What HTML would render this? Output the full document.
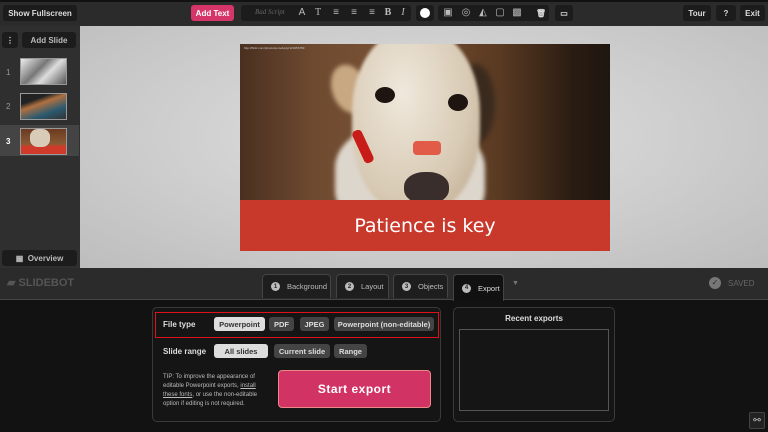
<!DOCTYPE html><html><head><style>
*{margin:0;padding:0;box-sizing:border-box}
body{width:768px;height:432px;overflow:hidden;background:#121212;font-family:"Liberation Sans",sans-serif;position:relative;color:#ddd}
.a{position:absolute}
.btn{position:absolute;background:#1c1c1c;border-radius:3px;color:#ddd;font-size:8px;font-weight:bold;display:flex;align-items:center;justify-content:center}
.ic{position:absolute;top:6px;height:14px;width:14px;color:#bbb;font-size:10px;text-align:center;line-height:14px}
.tab{position:absolute;top:274px;height:24px;background:#1e1e1e;border:1px solid #444;border-bottom:none;border-radius:4px 4px 0 0;font-size:7.5px;color:#bbb;display:flex;align-items:center;padding-left:8px}
.n{width:9px;height:9px;border-radius:50%;background:#bbb;color:#222;font-size:6px;display:inline-flex;align-items:center;justify-content:center;margin-right:7px;font-weight:bold}
.ch{position:absolute;height:14px;border-radius:3px;background:#444;color:#ddd;font-size:7.5px;font-weight:bold;display:flex;align-items:center;justify-content:center}
</style></head><body>
<div class="a" style="left:0;top:0;width:768px;height:26px;background:#2b2b2b;border-top:2px solid #111"></div>
<div class="btn" style="left:3px;top:5px;width:74px;height:16px">Show Fullscreen</div>
<div class="btn" style="left:191px;top:5px;width:43px;height:16px;background:#d6356a;color:#fff">Add Text</div>
<div class="a" style="left:241px;top:5px;width:170px;height:16px;background:#1c1c1c;border-radius:3px"></div>
<div class="a" style="left:255px;top:8px;font-size:7px;color:#666;font-style:italic;font-family:'Liberation Serif',serif">Bad Script</div>
<div class="ic" style="left:295px">A</div><div class="ic" style="left:311px;font-family:'Liberation Serif'">T</div><div class="ic" style="left:329px">≡</div><div class="ic" style="left:347px">≡</div><div class="ic" style="left:365px">≡</div><div class="ic" style="left:381px;font-family:'Liberation Serif';font-weight:bold">B</div><div class="ic" style="left:396px;font-family:'Liberation Serif';font-style:italic">I</div>
<div class="a" style="left:416px;top:5px;width:18px;height:16px;background:#1c1c1c;border-radius:3px"></div>
<div class="a" style="left:420px;top:8px;width:10px;height:10px;background:#fff;border-radius:50%"></div>
<div class="a" style="left:438px;top:5px;width:100px;height:16px;background:#1c1c1c;border-radius:3px"></div>
<div class="ic" style="left:441px">▣</div><div class="ic" style="left:459px">◎</div><div class="ic" style="left:476px">◭</div><div class="ic" style="left:493px">▢</div><div class="ic" style="left:510px">▩</div>
<div class="btn" style="left:533px;top:5px;width:16px;height:16px">🗑</div>
<div class="btn" style="left:555px;top:5px;width:18px;height:16px">▭</div>
<div class="btn" style="left:683px;top:5px;width:28px;height:16px">Tour</div>
<div class="btn" style="left:716px;top:5px;width:20px;height:16px">?</div>
<div class="btn" style="left:740px;top:5px;width:25px;height:16px">Exit</div>
<div class="a" style="left:0;top:26px;width:80px;height:242px;background:#2f2f2f"></div>
<div class="btn" style="left:2px;top:32px;width:16px;height:16px">⋮</div>
<div class="btn" style="left:22px;top:32px;width:54px;height:16px;color:#bbb">Add Slide</div>
<div class="a" style="left:0;top:125px;width:79px;height:31px;background:#444"></div>
<div class="a" style="left:6px;top:68px;font-size:8px;color:#999">1</div>
<div class="a" style="left:6px;top:102px;font-size:8px;color:#999">2</div>
<div class="a" style="left:6px;top:137px;font-size:8px;color:#fff;font-weight:bold">3</div>
<div class="a" style="left:20px;top:58px;width:47px;height:27px;background:linear-gradient(135deg,#eee,#777 40%,#ddd 60%,#555);border:1px solid #999"></div>
<div class="a" style="left:20px;top:93px;width:47px;height:27px;background:linear-gradient(160deg,#222 25%,#b07040 40%,#2a5a70 70%,#333);border:1px solid #999"></div>
<div class="a" style="left:20px;top:128px;width:47px;height:27px;background:linear-gradient(#6b3a20,#8a5a35 60%,#d03a2a 70%,#d03a2a);border:1px solid #999"></div>
<div class="a" style="left:30px;top:129px;width:20px;height:18px;background:#d8ccb8;border-radius:40%"></div>
<div class="btn" style="left:2px;top:250px;width:75px;height:16px;color:#bbb">▦ &nbsp;Overview</div>
<div class="a" style="left:80px;top:26px;width:688px;height:242px;background:radial-gradient(ellipse at 50% 45%,#e2e2e2,#bdbdbd)"></div>
<div class="a" style="left:240px;top:44px;width:370px;height:207px;overflow:hidden;background:linear-gradient(90deg,#4a3020,#6e4a30 20%,#7a5234 40%,#5a3a22 70%,#2a1c12 90%,#1e1610)">
<div class="a" style="left:92px;top:20px;width:35px;height:50px;border-radius:50%;background:#c8a882;filter:blur(2px);transform:rotate(-20deg)"></div>
<div class="a" style="left:215px;top:20px;width:40px;height:80px;border-radius:50%;background:#3a2a1e;filter:blur(3px)"></div>
<div class="a" style="left:95px;top:80px;width:150px;height:110px;border-radius:40%;background:#ddd6cc;filter:blur(2px)"></div>
<div class="a" style="left:112px;top:-15px;width:128px;height:185px;border-radius:45%;background:radial-gradient(ellipse at 40% 35%,#efe8dc,#d8cab4 60%,#b8a488);filter:blur(1.5px)"></div>
<div class="a" style="left:135px;top:43px;width:20px;height:16px;border-radius:50%;background:#1e1410"></div>
<div class="a" style="left:208px;top:50px;width:20px;height:17px;border-radius:50%;background:#1e1410"></div>
<div class="a" style="left:173px;top:97px;width:28px;height:14px;border-radius:4px;background:#e25a48"></div>
<div class="a" style="left:164px;top:128px;width:45px;height:32px;border-radius:45%;background:#3a2e2c"></div>
<div class="a" style="left:118px;top:85px;width:10px;height:35px;background:#c81c18;border-radius:4px;transform:rotate(-25deg)"></div>
<div class="a" style="left:4px;top:2px;font-size:3px;color:#ccc">http://flickr.com/photos/somebody/123456789</div>
<div class="a" style="left:0;top:156px;width:370px;height:51px;background:#c8392c;color:#fff;font-size:19px;display:flex;align-items:center;justify-content:center;font-family:'DejaVu Sans',sans-serif">Patience is key</div>
</div>
<div class="a" style="left:0;top:268px;width:768px;height:32px;background:#2b2b2b;border-bottom:1px solid #444"></div>
<div class="a" style="left:7px;top:276px;font-size:11px;font-weight:bold;color:#555">▰ SLIDEBOT</div>
<div class="tab" style="left:262px;width:69px"><span class="n">1</span>Background</div>
<div class="tab" style="left:336px;width:53px"><span class="n">2</span>Layout</div>
<div class="tab" style="left:393px;width:55px"><span class="n">3</span>Objects</div>
<div class="tab" style="left:453px;width:51px;background:#111;height:27px;color:#ddd"><span class="n">4</span>Export</div>
<div class="a" style="left:512px;top:280px;font-size:7px;color:#777">▼</div>
<div class="a" style="left:709px;top:277px;width:12px;height:12px;border-radius:50%;background:#777;color:#2b2b2b;font-size:8px;text-align:center;line-height:12px">✓</div>
<div class="a" style="left:728px;top:279px;font-size:8px;color:#666">SAVED</div>
<div class="a" style="left:152px;top:307px;width:289px;height:115px;border:1px solid #3a3a3a;border-radius:5px;background:#151515"></div>
<div class="a" style="left:155px;top:312px;width:284px;height:26px;border:1.5px solid #e0101a"></div>
<div class="a" style="left:163px;top:320px;font-size:8px;font-weight:bold;color:#ddd">File type</div>
<div class="ch" style="left:214px;top:317px;width:51px;background:#ddd;color:#333">Powerpoint</div>
<div class="ch" style="left:269px;top:317px;width:25px">PDF</div>
<div class="ch" style="left:300px;top:317px;width:29px">JPEG</div>
<div class="ch" style="left:334px;top:317px;width:100px">Powerpoint (non-editable)</div>
<div class="a" style="left:163px;top:347px;font-size:8px;font-weight:bold;color:#ddd">Slide range</div>
<div class="ch" style="left:214px;top:344px;width:54px;background:#ddd;color:#333">All slides</div>
<div class="ch" style="left:274px;top:344px;width:56px">Current slide</div>
<div class="ch" style="left:334px;top:344px;width:33px">Range</div>
<div class="a" style="left:163px;top:373px;width:100px;font-size:6px;line-height:9px;color:#bbb">TIP: To improve the appearance of editable Powerpoint exports, <u>install these fonts</u>, or use the non-editable option if editing is not required.</div>
<div class="a" style="left:278px;top:370px;width:153px;height:38px;background:#d13464;border:1px solid #e88;border-radius:4px;color:#fff;font-size:12px;font-weight:bold;display:flex;align-items:center;justify-content:center;letter-spacing:.5px">Start export</div>
<div class="a" style="left:453px;top:307px;width:162px;height:115px;border:1px solid #3a3a3a;border-radius:5px;background:#151515"></div>
<div class="a" style="left:453px;top:314px;width:162px;text-align:center;font-size:8px;font-weight:bold;color:#ddd">Recent exports</div>
<div class="a" style="left:459px;top:329px;width:150px;height:82px;border:1px solid #555"></div>
<div class="a" style="left:749px;top:412px;width:16px;height:17px;background:#222;border:1px solid #444;border-radius:2px;color:#ccc;font-size:9px;text-align:center;line-height:15px">⚯</div>
</body></html>
